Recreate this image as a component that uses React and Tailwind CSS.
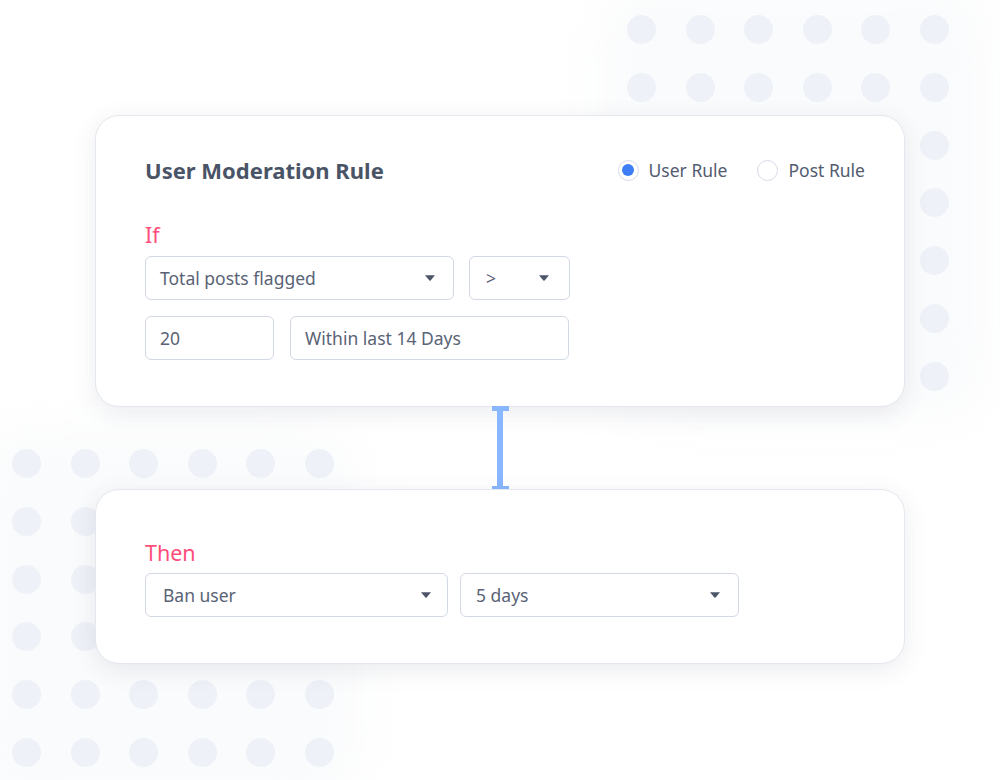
import React from "react";

const font = { fontFamily: "'Noto Sans', Lato, sans-serif" };

function Dots({ cols, rows }) {
  const items = [];
  for (let i = 0; i < cols * rows; i++) {
    items.push(<div key={i} className="w-[29px] h-[29px] rounded-full bg-[#eef1f7]" />);
  }
  return <div className="grid grid-cols-6 gap-x-[29.5px] gap-y-[28.8px]">{items}</div>;
}

function Caret() {
  return (
    <svg width="12" height="8" viewBox="0 0 12 8">
      <path d="M1 1.2 H11 L6.6 6.4 Q6 7 5.4 6.4 Z" fill="#4d5569" />
    </svg>
  );
}

function Select({ w, label, pl = "pl-[14px]", pr = "pr-[16px]" }) {
  return (
    <div className={`${w} h-[44px] flex items-center justify-between ${pl} ${pr} border border-[#d3d8e5] rounded-[6px] bg-white text-[17.5px] text-[#5a6376]`}>
      <span>{label}</span>
      <Caret />
    </div>
  );
}

function Input({ w, label }) {
  return (
    <div className={`${w} h-[44px] flex items-center px-[14px] border border-[#d3d8e5] rounded-[6px] bg-white text-[17.5px] text-[#5a6376]`}>
      {label}
    </div>
  );
}

function Radio({ checked, label }) {
  return (
    <div className="flex items-center gap-[10px]">
      <div className="w-[21px] h-[21px] rounded-full border-[1.5px] border-[#d6dae6] bg-white flex items-center justify-center">
        {checked && <div className="w-[12px] h-[12px] rounded-full bg-[#3d7ef7]" />}
      </div>
      <span className="text-[17.5px] text-[#535c6f]">{label}</span>
    </div>
  );
}

export default function App() {
  return (
    <div className="relative w-[1000px] h-[780px] bg-white overflow-hidden" style={font}>
      <div className="absolute left-[600px] top-[-20px] w-[390px] h-[440px] bg-[#fafbfc] rounded-[60px] blur-xl" />
      <div className="absolute left-[-30px] top-[430px] w-[390px] h-[380px] bg-[#fafbfc] rounded-[60px] blur-xl" />
      <div className="absolute left-[627px] top-[15px]">
        <Dots cols={6} rows={7} />
      </div>
      <div className="absolute left-[12px] top-[449px]">
        <Dots cols={6} rows={6} />
      </div>

      <div className="relative flex flex-col items-center pt-[115px]">
        <div className="w-[810px] h-[292px] bg-white border border-[#e4e7ee] rounded-[24px] shadow-[0_6px_24px_rgba(60,70,100,0.10)] pl-[49px] pr-[39px] pt-[39px]">
          <div className="flex items-center justify-between">
            <h1 className="text-[22px] font-bold text-[#4a5467] leading-[30px]">User Moderation Rule</h1>
            <div className="flex items-center gap-[30px]">
              <Radio checked label="User Rule" />
              <Radio label="Post Rule" />
            </div>
          </div>
          <div className="mt-[36px] text-[21.5px] leading-[28px] text-[#ff4d7a]">If</div>
          <div className="mt-[7px] flex gap-[15px]">
            <Select w="w-[309px]" label="Total posts flagged" pr="pr-[17px]" />
            <Select w="w-[101px]" label=">" pl="pl-[16px]" pr="pr-[19px]" />
          </div>
          <div className="mt-[16px] flex gap-[16px]">
            <Input w="w-[129px]" label="20" />
            <Input w="w-[279px]" label="Within last 14 Days" />
          </div>
        </div>

        <div className="flex flex-col items-center -mt-[1px]">
          <div className="w-[17px] h-[5px] bg-[#88b6ff]" />
          <div className="w-[6px] h-[75px] bg-[#88b6ff]" />
          <div className="w-[17px] h-[5px] bg-[#88b6ff]" />
        </div>

        <div className="w-[810px] h-[175px] -mt-[2px] bg-white border border-[#e4e7ee] rounded-[24px] shadow-[0_6px_24px_rgba(60,70,100,0.10)] pl-[49px] pt-[49px]">
          <div className="text-[21.5px] leading-[28px] text-[#ff4d7a]">Then</div>
          <div className="mt-[6px] flex gap-[12px]">
            <Select w="w-[303px]" label="Ban user" pl="pl-[17px]" pr="pr-[15px]" />
            <Select w="w-[279px]" label="5 days" pl="pl-[15px]" pr="pr-[17px]" />
          </div>
        </div>
      </div>
    </div>
  );
}
